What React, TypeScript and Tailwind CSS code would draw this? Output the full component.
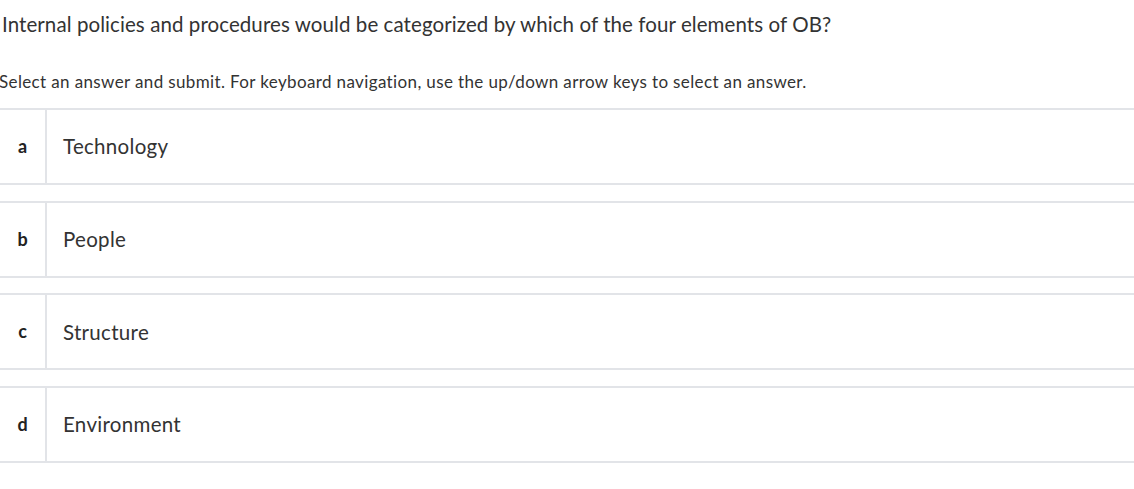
const options = [
  { key: "a", label: "Technology" },
  { key: "b", label: "People" },
  { key: "c", label: "Structure" },
  { key: "d", label: "Environment" },
];

export default function App() {
  return (
    <div className="min-h-[489px] w-[1134px] overflow-hidden bg-white text-[#333] [font-family:Lato,'Noto_Sans',sans-serif]">
      <h1 className="pl-[2px] pt-[11px] text-[20.5px] leading-[26px] tracking-[0.08px]">
        Internal policies and procedures would be categorized by which of the four elements of OB?
      </h1>
      <p className="-ml-[1px] mt-[34px] text-[17px] leading-[22px] tracking-[0.37px]">
        Select an answer and submit. For keyboard navigation, use the up/down arrow keys to select an answer.
      </p>
      <ul className="mt-[15px] flex flex-col gap-[15.7px]">
        {options.map(o => (
          <li key={o.key} className="flex h-[77px] border-y-2 border-[#e2e4e8]">
            <div className="flex w-[47px] items-center justify-center border-r-2 border-[#e2e4e8] text-[18px] font-bold text-[#222]">
              {o.key}
            </div>
            <div className="flex items-center pl-[16px] text-[20.5px] tracking-[0.3px] text-[#333]">{o.label}</div>
          </li>
        ))}
      </ul>
    </div>
  );
}
